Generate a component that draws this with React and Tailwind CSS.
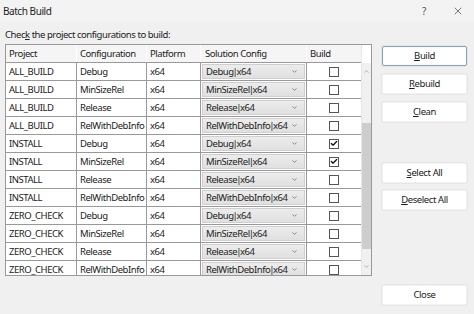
import { Check, ChevronDown, ChevronUp, X } from 'lucide-react';

const rows = [
    ['ALL_BUILD', 'Debug', false],
    ['ALL_BUILD', 'MinSizeRel', false],
    ['ALL_BUILD', 'Release', false],
    ['ALL_BUILD', 'RelWithDebInfo', false],
    ['INSTALL', 'Debug', true],
    ['INSTALL', 'MinSizeRel', true],
    ['INSTALL', 'Release', false],
    ['INSTALL', 'RelWithDebInfo', false],
    ['ZERO_CHECK', 'Debug', false],
    ['ZERO_CHECK', 'MinSizeRel', false],
    ['ZERO_CHECK', 'Release', false],
    ['ZERO_CHECK', 'RelWithDebInfo', false],
];

function Btn({ children, focused }) {
    return (
        <button
            className={
                'w-[85px] h-[20px] bg-white text-[9.5px] tracking-[-0.4px] text-[#1b1b1b] rounded-[2px] shadow-[0_0_0_1px_#e6e6e6] ' +
                (focused ? 'border border-[#7aa3d1]' : 'border border-[#f3f3f3]')
            }
        >
            {children}
        </button>
    );
}

export default function App() {
    return (
        <div className="w-[474px] h-[314px] bg-[#f0f0f0] text-[#222] text-[9.5px] tracking-[-0.45px] flex flex-col overflow-hidden" style={{ fontFamily: '"Noto Sans", "Open Sans", sans-serif' }}>
            {/* Title bar */}
            <div className="h-[22px] flex items-center justify-between pl-[3px] bg-[#f3f3f3] text-[10px]">
                <span>Batch Build</span>
                <div className="flex items-center">
                    <span className="w-[36px] text-center text-[#555] text-[10px]">?</span>
                    <span className="w-[32px] flex justify-center"><X className="w-[12px] h-[12px] text-[#333]" strokeWidth={1.3} /></span>
                </div>
            </div>

            <div className="pl-[5px] pt-[7px] h-[22px] leading-[12px]">
                Chec<u>k</u> the project configurations to build:
            </div>

            <div className="flex">
                {/* Grid */}
                <div className="ml-[5px] w-[367px] h-[232px] border border-[#999] bg-white flex overflow-hidden">
                    <div className="w-[355px]">
                        <div className="flex h-[18px] bg-[#f5f5f5] border-b border-[#999] leading-[18px]">
                            <div className="w-[71px] pl-[3px] border-r border-white">Project</div>
                            <div className="w-[70px] pl-[3px] border-r border-white">Configuration</div>
                            <div className="w-[54px] pl-[3px] border-r border-white">Platform</div>
                            <div className="w-[106px] pl-[4px] border-r border-white">Solution Config</div>
                            <div className="w-[54px] pl-[3px]">Build</div>
                        </div>
                        {rows.map(([p, c, checked], i) => (
                            <div key={i} className="flex h-[18px] border-b border-[#999] leading-[17px]">
                                <div className="w-[71px] pl-[3px] border-r border-[#999]">{p}</div>
                                <div className="w-[70px] pl-[3px] border-r border-[#999]">{c}</div>
                                <div className="w-[54px] pl-[3px] border-r border-[#999]">x64</div>
                                <div className="w-[106px] border-r border-[#999] p-[1px]">
                                    <div className="h-full bg-gradient-to-b from-[#ececec] to-[#e0e0e0] border border-[#cfcfcf] flex items-center justify-between pl-[3px] pr-[6px] leading-none">
                                        <span>{c}<span className="-mx-[1px]">|</span>x64</span>
                                        <ChevronDown className="w-[7px] h-[7px] text-[#666]" strokeWidth={2.5} />
                                    </div>
                                </div>
                                <div className="w-[54px] flex items-center justify-center">
                                    <div className="w-[10px] h-[10px] border border-[#555] bg-white flex items-center justify-center">
                                        {checked && <Check className="w-[9px] h-[9px] text-[#111]" strokeWidth={4} />}
                                    </div>
                                </div>
                            </div>
                        ))}
                    </div>
                    {/* Scrollbar */}
                    <div className="w-[11px] border-l border-[#e6e6e6] bg-[#f0f0f0] flex flex-col">
                        <div className="h-[18px] bg-white"></div>
                        <div className="h-[17px] flex items-center justify-center">
                            <ChevronUp className="w-[7px] h-[7px] text-[#999]" strokeWidth={2.5} />
                        </div>
                        <div className="h-[43px]"></div>
                        <div className="h-[126px] bg-[#cdcdcd]"></div>
                        <div className="flex-1"></div>
                        <div className="h-[17px] flex items-center justify-center">
                            <ChevronDown className="w-[7px] h-[7px] text-[#999]" strokeWidth={2.5} />
                        </div>
                    </div>
                </div>

                {/* Buttons */}
                <div className="ml-[10px] flex flex-col pt-[2px]">
                    <Btn focused><u>B</u>uild</Btn>
                    <div className="h-[8px]"></div>
                    <Btn><u>R</u>ebuild</Btn>
                    <div className="h-[8px]"></div>
                    <Btn><u>C</u>lean</Btn>
                    <div className="h-[41px]"></div>
                    <Btn><u>S</u>elect All</Btn>
                    <div className="h-[7px]"></div>
                    <Btn><u>D</u>eselect All</Btn>
                </div>
            </div>

            <div className="flex justify-end pr-[7px] pt-[9px]">
                <Btn>Close</Btn>
            </div>
        </div>
    );
}
